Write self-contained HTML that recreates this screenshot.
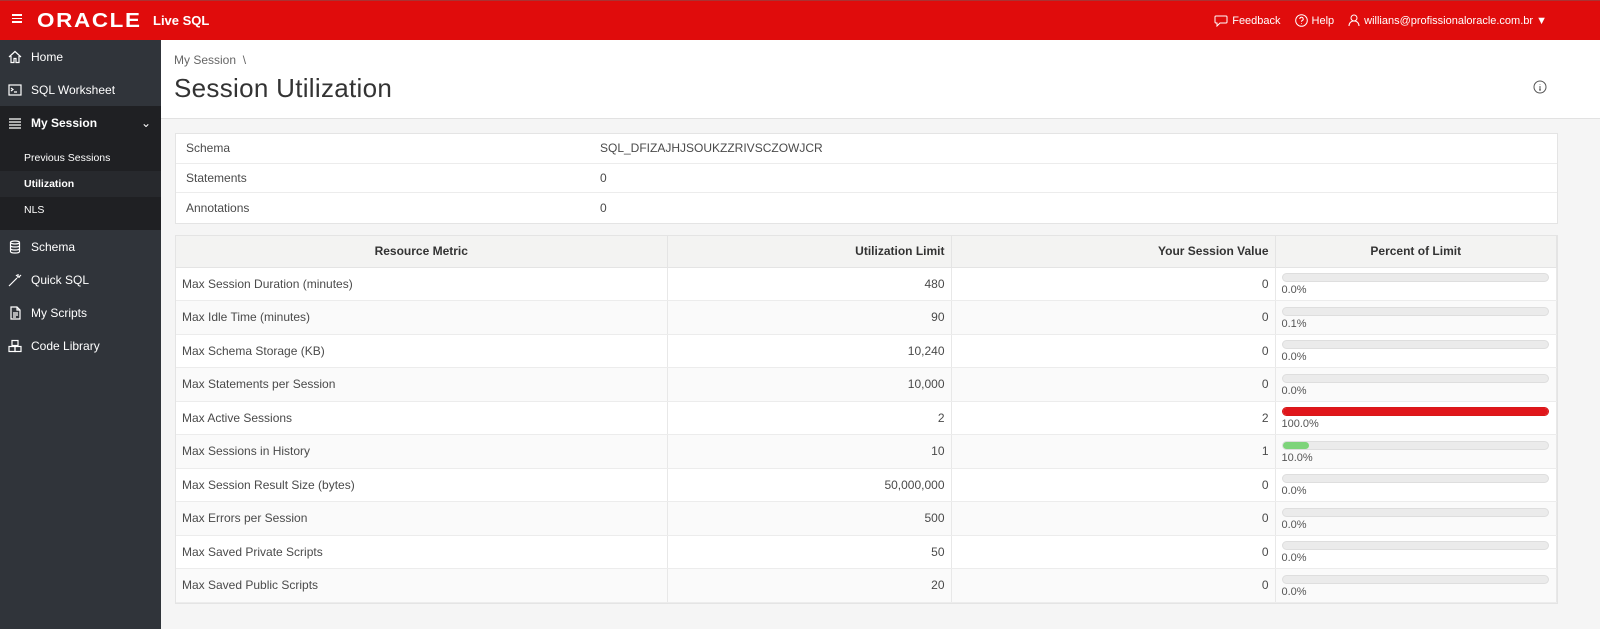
<!DOCTYPE html>
<html><head><meta charset="utf-8"><style>
*{box-sizing:border-box;margin:0;padding:0}
body{width:1600px;height:629px;overflow:hidden;font-family:"Liberation Sans",sans-serif;background:#f5f5f5;position:relative;color:#4a4a4a}
#top{position:absolute;left:0;top:0;width:1600px;height:40px;background:#e00c0c;border-top:1px solid #a33;color:#fff}
#top .ham{position:absolute;left:12px;top:13px;width:10px}
#top .ham i{display:block;height:1.5px;background:#fff;margin-bottom:2px}
#logo{position:absolute;left:37px;top:9px;font-size:20px;font-weight:bold;letter-spacing:1.5px;transform:scaleX(1.12);transform-origin:left}
#live{position:absolute;left:153px;top:12px;font-size:13px;font-weight:bold}
#tr{position:absolute;right:53px;top:13px;font-size:11px;display:flex;gap:14px;align-items:center}
#tr span{display:flex;align-items:center;gap:4px}
#side{position:absolute;left:0;top:40px;width:161px;height:589px;background:#30343a;color:#fff;font-size:12px}
.it{height:33px;display:flex;align-items:center;padding-left:8px}
.it svg{width:14px;height:14px;margin-right:9px;fill:none;stroke:#fff;stroke-width:1.2}
.grp{background:#1f2023}
.sub{height:26px;display:flex;align-items:center;padding-left:24px;font-size:10.5px}
#main{position:absolute;left:161px;top:40px;width:1439px;height:589px}
#hd{height:79px;background:#fff;border-bottom:1px solid #e2e2e2;position:relative}
#bc{position:absolute;left:13px;top:13px;font-size:12px;color:#666}
#h1{position:absolute;left:13px;top:33px;font-size:26px;color:#333;letter-spacing:.3px}
.panel{position:absolute;left:14px;width:1383px;background:#fff;border:1px solid #e4e4e4}
#info{top:93px}
#info div{height:29.5px;border-bottom:1px solid #ececec;font-size:12px;display:flex;align-items:center;padding-left:10px}
#info div:last-child{border-bottom:0}
#info b{font-weight:normal;width:414px}
table{border-collapse:collapse;width:100%;font-size:12px}
th{height:31px;background:#f3f3f2;font-weight:bold;color:#333;border-right:1px solid #e4e4e4;border-bottom:1px solid #e4e4e4;padding:0 6px}
td{height:33.5px;border-right:1px solid #e8e8e8;border-bottom:1px solid #ececec;padding:0 6px;background:#fff}
tr:nth-child(odd) td{background:#fafafa}
.r{text-align:right}
.bar{height:9px;border-radius:5px;background:#ebebeb;border:1px solid #dedede;margin-top:2px;margin-right:1px}
.bar i{display:block;height:100%;border-radius:5px}
.pc{font-size:11px;color:#555;margin-top:2px}
</style></head><body>
<div id="top">
<div class="ham"><i></i><i></i><i></i></div>
<div id="logo">ORACLE</div>
<div id="live">Live SQL</div>
<div id="tr"><span><svg width="14" height="12" viewBox="0 0 14 12" fill="none" stroke="#fff"><path d="M2 1h10a1 1 0 0 1 1 1v5a1 1 0 0 1-1 1H6l-3 3V8H2a1 1 0 0 1-1-1V2a1 1 0 0 1 1-1z"/></svg>Feedback</span><span><svg width="13" height="13" viewBox="0 0 13 13" fill="none" stroke="#fff"><circle cx="6.5" cy="6.5" r="5.8"/><path d="M4.8 5a1.7 1.7 0 1 1 2.4 1.5c-.6.3-.7.7-.7 1.3M6.5 9.3v.6"/></svg>Help</span><span><svg width="12" height="13" viewBox="0 0 12 13" fill="none" stroke="#fff"><circle cx="6" cy="4" r="3"/><path d="M1 12c0-3 2-5 5-5s5 2 5 5"/></svg>willians@profissionaloracle.com.br ▼</span></div>
</div>
<div id="side">
<div class="it"><svg viewBox="0 0 14 14"><path d="M1 7L7 1.5 13 7M3 6v6.5h3v-4h2v4h3V6"/></svg>Home</div>
<div class="it"><svg viewBox="0 0 14 14"><rect x="1" y="2" width="12" height="10"/><path d="M3 5l2 1.5L3 8M6 9h3"/></svg>SQL Worksheet</div>
<div class="grp">
<div class="it" style="font-weight:bold"><svg viewBox="0 0 14 14"><path d="M1 3h12M1 6h12M1 9h12M1 12h12"/></svg>My Session<span style="margin-left:auto;margin-right:10px;font-weight:normal">⌄</span></div>
<div style="height:6px"></div>
<div class="sub">Previous Sessions</div>
<div class="sub" style="background:#27292d;font-weight:bold">Utilization</div>
<div class="sub">NLS</div>
<div style="height:7px"></div>
</div>
<div class="it"><svg viewBox="0 0 14 14"><ellipse cx="7" cy="2.5" rx="4.5" ry="1.5"/><path d="M2.5 2.5v9c0 1 2 1.5 4.5 1.5s4.5-.5 4.5-1.5v-9M2.5 5.5c0 1 2 1.5 4.5 1.5s4.5-.5 4.5-1.5M2.5 8.5c0 1 2 1.5 4.5 1.5s4.5-.5 4.5-1.5"/></svg>Schema</div>
<div class="it"><svg viewBox="0 0 14 14"><path d="M1 13l8-8M10 1v3M12 4h-3M13 2l-2 2M8 2l1 1"/></svg>Quick SQL</div>
<div class="it"><svg viewBox="0 0 14 14"><path d="M3 1h6l3 3v9H3zM9 1v3h3M5 7h5M5 9h5M5 11h3"/></svg>My Scripts</div>
<div class="it"><svg viewBox="0 0 14 14"><rect x="4" y="1.5" width="6" height="5"/><rect x="1" y="7.5" width="6" height="5"/><rect x="7" y="7.5" width="6" height="5"/></svg>Code Library</div>
</div>
<div id="main">
<div id="hd"><div id="bc">My Session &nbsp;\</div><div id="h1">Session Utilization</div>
<svg style="position:absolute;left:1372px;top:40px" width="14" height="14" viewBox="0 0 14 14" fill="none" stroke="#555"><circle cx="7" cy="7" r="6"/><path d="M7 6v4M6 10h2M7 4v.5"/></svg></div>
<div class="panel" id="info">
<div><b>Schema</b>SQL_DFIZAJHJSOUKZZRIVSCZOWJCR</div>
<div><b>Statements</b>0</div>
<div><b>Annotations</b>0</div>
</div>
<div class="panel" style="top:195px">
<table>
<tr><th style="width:491px">Resource Metric</th><th class="r" style="width:284px">Utilization Limit</th><th class="r" style="width:324px">Your Session Value</th><th>Percent of Limit</th></tr>
<tr><td>Max Session Duration (minutes)</td><td class="r">480</td><td class="r">0</td><td><div class="bar"></div><div class="pc">0.0%</div></td></tr>
<tr><td>Max Idle Time (minutes)</td><td class="r">90</td><td class="r">0</td><td><div class="bar"></div><div class="pc">0.1%</div></td></tr>
<tr><td>Max Schema Storage (KB)</td><td class="r">10,240</td><td class="r">0</td><td><div class="bar"></div><div class="pc">0.0%</div></td></tr>
<tr><td>Max Statements per Session</td><td class="r">10,000</td><td class="r">0</td><td><div class="bar"></div><div class="pc">0.0%</div></td></tr>
<tr><td>Max Active Sessions</td><td class="r">2</td><td class="r">2</td><td><div class="bar" style="border-color:#d81818"><i style="width:100%;background:#e0161b"></i></div><div class="pc">100.0%</div></td></tr>
<tr><td>Max Sessions in History</td><td class="r">10</td><td class="r">1</td><td><div class="bar"><i style="width:10%;background:#7dd47a"></i></div><div class="pc">10.0%</div></td></tr>
<tr><td>Max Session Result Size (bytes)</td><td class="r">50,000,000</td><td class="r">0</td><td><div class="bar"></div><div class="pc">0.0%</div></td></tr>
<tr><td>Max Errors per Session</td><td class="r">500</td><td class="r">0</td><td><div class="bar"></div><div class="pc">0.0%</div></td></tr>
<tr><td>Max Saved Private Scripts</td><td class="r">50</td><td class="r">0</td><td><div class="bar"></div><div class="pc">0.0%</div></td></tr>
<tr><td>Max Saved Public Scripts</td><td class="r">20</td><td class="r">0</td><td><div class="bar"></div><div class="pc">0.0%</div></td></tr>
</table>
</div>
</div>
</body></html>
